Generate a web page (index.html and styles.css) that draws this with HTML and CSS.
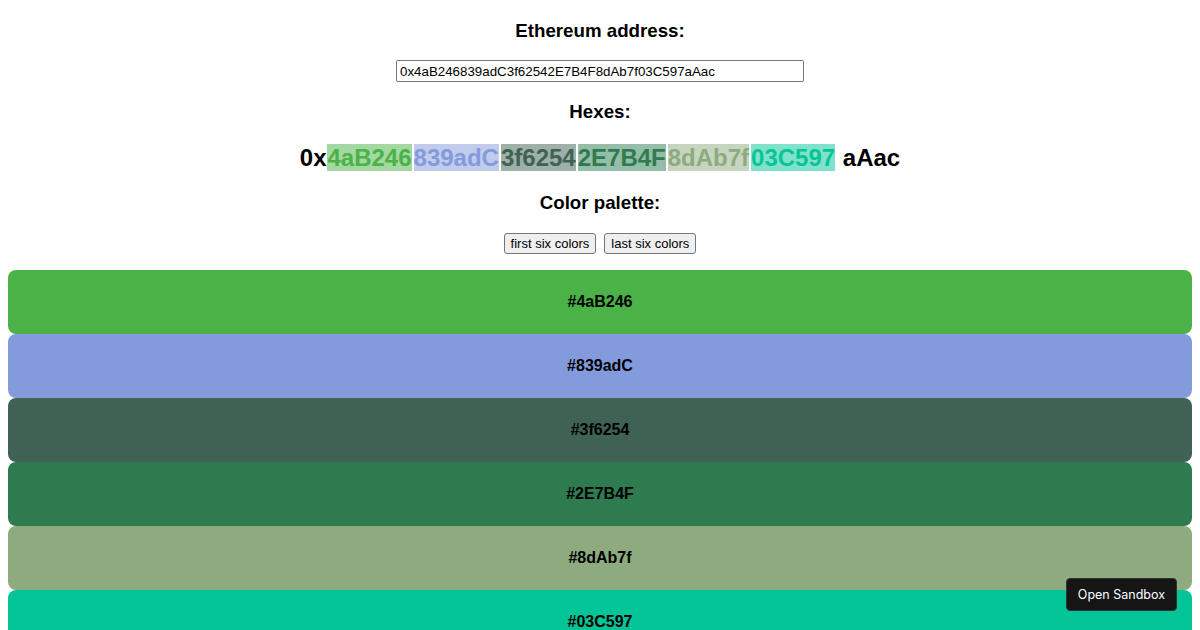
FILE: index.html
```html
<!DOCTYPE html>
<html lang="en">
<head>
  <meta charset="UTF-8" />
  <meta name="viewport" content="width=device-width, initial-scale=1.0" />
  <title>Ethereum Colors</title>
  <link rel="stylesheet" href="styles.css">
</head>
<body>
  <div class="app">
    <h3>Ethereum address:</h3>
    <div>
      <input class="address" type="text" value="0x4aB246839adC3f62542E7B4F8dAb7f03C597aAac" />
    </div>

    <h3>Hexes:</h3>
    <h2 class="hexes">0x<span class="hex" style="color: #4aB246; background-color: #4aB24680">4aB246</span><span class="hex" style="color: #839adC; background-color: #839adC80">839adC</span><span class="hex" style="color: #3f6254; background-color: #3f625480">3f6254</span><span class="hex" style="color: #2E7B4F; background-color: #2E7B4F80">2E7B4F</span><span class="hex" style="color: #8dAb7f; background-color: #8dAb7f80">8dAb7f</span><span class="hex" style="color: #03C597; background-color: #03C59780">03C597</span> aAac</h2>

    <h3>Color palette:</h3>
    <div class="buttons">
      <button>first six colors</button>
      <button>last six colors</button>
    </div>

    <div class="palette">
      <div class="swatch" style="background-color: #4aB246">#4aB246</div>
      <div class="swatch" style="background-color: #839adC">#839adC</div>
      <div class="swatch" style="background-color: #3f6254">#3f6254</div>
      <div class="swatch" style="background-color: #2E7B4F">#2E7B4F</div>
      <div class="swatch" style="background-color: #8dAb7f">#8dAb7f</div>
      <div class="swatch" style="background-color: #03C597">#03C597</div>
    </div>
  </div>

  <button class="sandbox-btn">Open Sandbox</button>
</body>
</html>
```

FILE: styles.css
```css
body {
  font-family: 'Liberation Sans', Arial, sans-serif;
  margin: 0 8px;
  padding-top: 1px;
  color: #000;
}
.app {
  text-align: center;
}
.address {
  width: 408px;
  box-sizing: border-box;
  height: 22px;
  font-family: 'Liberation Sans', Arial, sans-serif;
  font-size: 13.33px;
  padding: 1px 3px;
  border: 1px solid #767676;
  border-radius: 2px;
}
.hexes {
  font-size: 24px;
  margin: 21px 0 20px;
}
.hex {
  margin: 0 1px;
}
.buttons {
  display: flex;
  justify-content: center;
  gap: 8px;
  margin-bottom: 16px;
}
.buttons button {
  font-family: 'Liberation Sans', Arial, sans-serif;
  font-size: 13px;
  height: 21px;
  padding: 0 6px;
  background: #efefef;
  border: 1px solid #767676;
  border-radius: 3px;
}
.swatch {
  height: 64px;
  border-radius: 8px;
  display: flex;
  align-items: center;
  justify-content: center;
  font-weight: bold;
  font-size: 16px;
}
.sandbox-btn {
  position: fixed;
  right: 23px;
  bottom: 19px;
  background: #151515;
  color: #fff;
  border: 1px solid #333;
  border-radius: 4px;
  padding: 0 11px;
  height: 33px;
  font-family: Inter, 'Liberation Sans', sans-serif;
  font-size: 12.5px;
}
```
